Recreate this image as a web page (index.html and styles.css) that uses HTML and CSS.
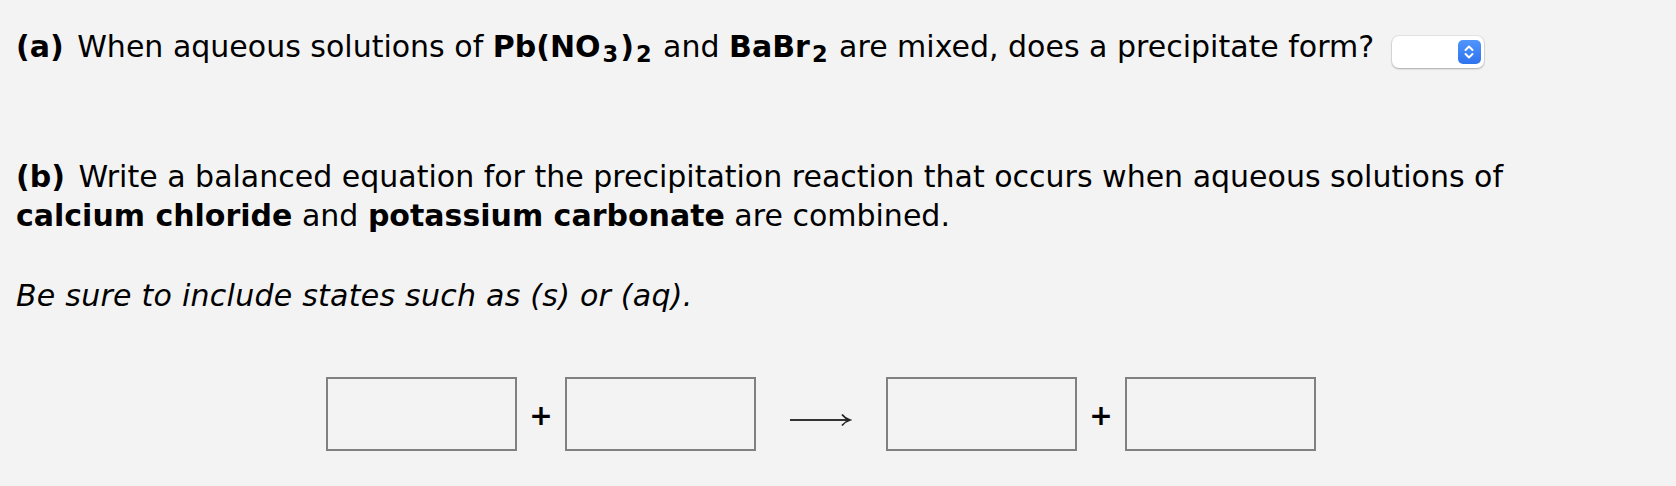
FILE: index.html
```html
<!DOCTYPE html>
<html>
<head>
<meta charset="utf-8">
<link rel="stylesheet" href="styles.css">
</head>
<body>
<div class="page">
  <p class="q q-a"><b class="label">(a)</b> When aqueous solutions of <b>Pb(NO<sub>3</sub>)<sub>2</sub></b> and <b>BaBr<sub>2</sub></b> are mixed, does a precipitate form? <span class="select"><span class="select-btn"><svg width="12" height="16" viewBox="0 0 12 16"><path d="M2.5 6 L6 2.5 L9.5 6 M2.5 10 L6 13.5 L9.5 10" fill="none" stroke="#fff" stroke-width="2" stroke-linecap="round" stroke-linejoin="round"/></svg></span></span></p>
  <p class="q q-b"><b class="label">(b)</b> Write a balanced equation for the precipitation reaction that occurs when aqueous solutions of <b>calcium chloride</b> and <b>potassium carbonate</b> are combined.</p>
  <p class="q q-note"><i>Be sure to include states such as (s) or (aq).</i></p>
  <div class="equation">
    <div class="box"></div>
    <div class="op">+</div>
    <div class="box"></div>
    <div class="arrow"><svg width="62" height="14" viewBox="0 0 62 14"><path d="M0 7 H59" stroke="#333" stroke-width="2" fill="none"/><path d="M52 1.5 Q55 5.5 60 7 Q55 8.5 52 12.5" stroke="#222" stroke-width="1.8" fill="none"/></svg></div>
    <div class="box"></div>
    <div class="op">+</div>
    <div class="box"></div>
  </div>
</div>
</body>
</html>
```
FILE: styles.css
```css
html, body {
  margin: 0;
  padding: 0;
  background: #f3f3f3;
}
body {
  font-family: "DejaVu Sans", Verdana, sans-serif;
  color: #000;
}
.page {
  padding: 27px 0 0 16px;
}
.q {
  margin: 0;
  font-size: 30px;
  line-height: 39px;
}
.q b {
  font-weight: bold;
}
.q .label {
  margin-right: 4px;
}
sub {
  font-size: 0.75em;
  vertical-align: -0.22em;
  line-height: 0;
  padding: 0 2px;
}
.q-b {
  margin-top: 89px;
  max-width: 1520px;
}
.q-note {
  margin-top: 41px;
}
.q-note i {
  letter-spacing: 0.25px;
}
.select {
  display: inline-flex;
  justify-content: flex-end;
  align-items: center;
  box-sizing: border-box;
  width: 92px;
  height: 32px;
  margin-left: 8px;
  padding-right: 3px;
  vertical-align: -3px;
  background: #fff;
  border-radius: 7px;
  box-shadow: 0 0 0 1px rgba(0,0,0,0.06), 0 1px 2px rgba(0,0,0,0.25);
}
.select-btn {
  display: flex;
  align-items: center;
  justify-content: center;
  width: 23px;
  height: 24px;
  border-radius: 5px;
  background: linear-gradient(#4f95fb, #2f73ef);
}
.equation {
  display: flex;
  align-items: center;
  margin-top: 62px;
  margin-left: 310px;
}
.box {
  box-sizing: border-box;
  width: 191px;
  height: 74px;
  border: 2px solid #808080;
}
.op {
  width: 48px;
  text-align: center;
  font-size: 28px;
  font-weight: bold;
  line-height: 1;
  padding-top: 4px;
}
.arrow {
  width: 130px;
  display: flex;
  justify-content: center;
  padding-top: 12px;
}
```
